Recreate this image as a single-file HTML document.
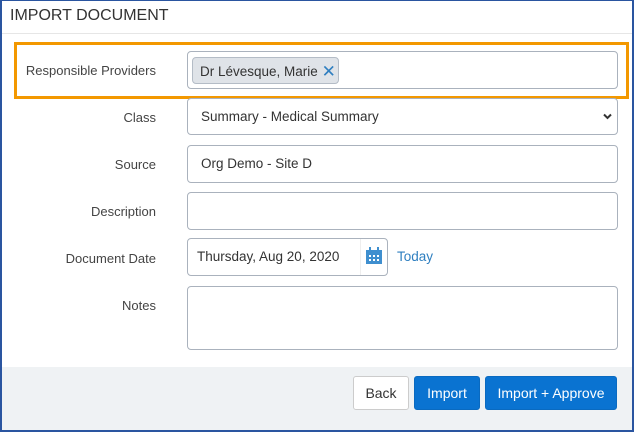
<!DOCTYPE html>
<html><head><style>
*{box-sizing:border-box;margin:0;padding:0}
body{width:634px;height:432px;background:#fff;font-family:"Liberation Sans",sans-serif;font-size:13px;color:#333;position:relative;overflow:hidden}
.frame{position:absolute;left:0;top:0;width:634px;height:432px;border:2px solid #2a55a0;border-top:1px solid #2a55a0}
.hdr{position:absolute;left:10px;top:7px;font-size:16px;color:#333}
.div{position:absolute;left:2px;right:2px;top:33px;height:1px;background:#e6e6e6}
.lbl{position:absolute;right:478px;font-size:13px;color:#444;text-align:right;white-space:nowrap}
.in{position:absolute;left:187px;width:431px;border:1px solid #aab2bd;border-radius:4px;background:#fff;font-size:13.5px;color:#333;padding-left:13px;line-height:36px}
.orange{position:absolute;left:14px;top:42px;width:615px;height:57px;border:3px solid #f39800}
.tag{position:absolute;left:4px;top:5px;height:27px;width:147px;background:#dfe3e8;border:1px solid #b4bcc6;border-radius:4px;line-height:25px;padding-left:7px;font-size:13.5px}
.foot{position:absolute;left:2px;right:2px;top:367px;bottom:2px;background:#eff2f4}
.btn{position:absolute;top:376px;height:34px;border-radius:3px;line-height:32px;text-align:center;font-size:14px}
.blue{background:#0a73d1;color:#fff;border:1px solid #0a6ac0}
</style></head><body>
<div class="hdr">IMPORT DOCUMENT</div>
<div class="div"></div>
<div class="lbl" style="top:63px">Responsible Providers</div>
<div class="in" style="top:51px;height:38px"><div class="tag">Dr Lévesque, Marie <span style="color:#2f7fc0;font-size:17px;position:relative;top:1px">✕</span></div></div>
<div class="orange"></div>
<div class="lbl" style="top:110px">Class</div>
<div class="in" style="top:98px;height:37px;line-height:35px">Summary - Medical Summary<svg style="position:absolute;right:5px;top:14px" width="9" height="7" viewBox="0 0 9 7"><path d="M1 1.5l3.5 3.5 3.5-3.5" stroke="#333" stroke-width="2" fill="none"/></svg></div>
<div class="lbl" style="top:157px">Source</div>
<div class="in" style="top:145px;height:38px">Org Demo - Site D</div>
<div class="lbl" style="top:204px">Description</div>
<div class="in" style="top:192px;height:38px"></div>
<div class="lbl" style="top:251px">Document Date</div>
<div class="in" style="top:238px;height:38px;width:201px;padding-left:9px">Thursday, Aug 20, 2020
<div style="position:absolute;left:172px;top:0;bottom:0;width:1px;background:#eee"></div>
<svg style="position:absolute;left:178px;top:8px" width="16" height="17" viewBox="0 0 16 17"><rect x="0" y="3" width="16" height="14" fill="#3f8fcf"/><rect x="3" y="0" width="2" height="4" fill="#3f8fcf"/><rect x="11" y="0" width="2" height="4" fill="#3f8fcf"/><g fill="#fff"><rect x="3" y="8" width="2" height="2"/><rect x="7" y="8" width="2" height="2"/><rect x="11" y="8" width="2" height="2"/><rect x="3" y="12" width="2" height="2"/><rect x="7" y="12" width="2" height="2"/><rect x="11" y="12" width="2" height="2"/></g></svg></div>
<div style="position:absolute;left:397px;top:249px;color:#2f7fc0;font-size:13.5px">Today</div>
<div class="lbl" style="top:298px">Notes</div>
<div class="in" style="top:286px;height:64px"></div>
<div class="foot"></div>
<div class="btn" style="left:353px;width:56px;background:#fff;border:1px solid #ccc;color:#333">Back</div>
<div class="btn blue" style="left:414px;width:66px">Import</div>
<div class="btn blue" style="left:485px;width:132px">Import + Approve</div>
<div class="frame"></div>
</body></html>
